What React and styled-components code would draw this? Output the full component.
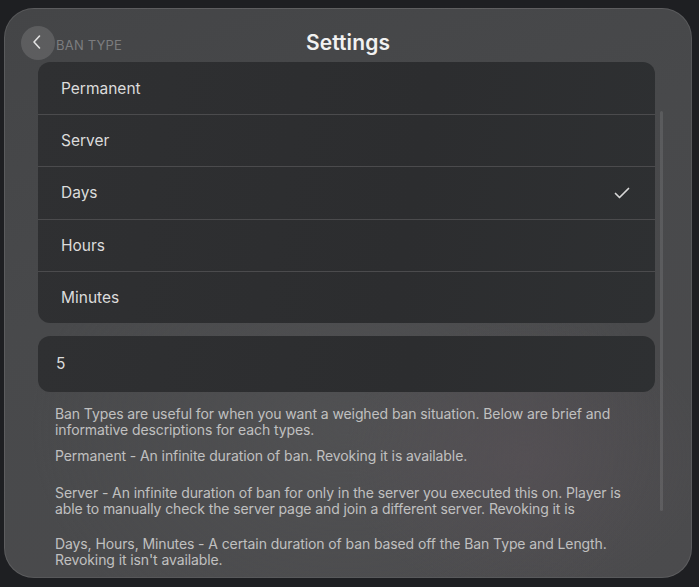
import React from "react";
import styled, { createGlobalStyle } from "styled-components";

const Global = createGlobalStyle`
  html, body { margin: 0; padding: 0; background: #1e1f22; }
  body { font-family: Inter, "Noto Sans", sans-serif; -webkit-font-smoothing: antialiased; }
  * { box-sizing: border-box; }
`;

const Page = styled.div`
  width: 699px;
  height: 587px;
  padding: 8px 7px 9px 4px;
  background: #1e1f22;
`;

const Panel = styled.div`
  position: relative;
  height: 570px;
  border-radius: 30px;
  overflow: hidden;
  border: 1px solid rgba(255, 255, 255, 0.1);
  background:
    radial-gradient(ellipse 260px 200px at 520px 450px, rgba(90, 82, 88, 0.55), transparent 70%),
    radial-gradient(ellipse 420px 320px at 340px 420px, rgba(85, 85, 87, 0.6), transparent 75%),
    linear-gradient(160deg, #444547 0%, #48494b 40%, #4b4b4d 100%);
`;

const Header = styled.div`
  position: absolute;
  top: 0;
  left: 0;
  right: 0;
  height: 60px;
  display: flex;
  align-items: center;
  justify-content: center;
  padding-top: 7px;
  pointer-events: none;
`;

const Title = styled.h1`
  margin: 0;
  font-size: 21px;
  font-weight: 600;
  color: #f1f1f1;
  letter-spacing: 0.1px;
`;

const BackButton = styled.button`
  position: absolute;
  left: 16px;
  top: 17px;
  width: 34px;
  height: 34px;
  border-radius: 50%;
  border: none;
  padding: 0;
  background: rgba(255, 255, 255, 0.13);
  display: flex;
  align-items: center;
  justify-content: center;
  padding-right: 3px;
  padding-bottom: 2px;
`;

const Content = styled.div`
  padding: 28px 36px 0 33px;
  display: flex;
  flex-direction: column;
`;

const SectionLabel = styled.div`
  font-size: 13px;
  line-height: 16px;
  text-transform: uppercase;
  color: #7c7d7f;
  padding-left: 18px;
  margin-bottom: 9px;
  letter-spacing: 0.2px;
`;

const Card = styled.div`
  background: linear-gradient(100deg, #2f3032 0%, #2c2d2f 60%, #2e3032 100%);
  border-radius: 12px;
  overflow: hidden;
`;

const Row = styled.div`
  height: 52.2px;
  display: flex;
  align-items: center;
  justify-content: space-between;
  padding: 0 25px 0 23px;
  font-size: 15.5px;
  color: #dcdcdc;
  border-top: ${(p) => (p.$first ? "none" : "1px solid #4b4b4d")};
`;

const InputCard = styled(Card)`
  margin-top: 13px;
  height: 56px;
  display: flex;
  align-items: center;
  padding: 0 18px;
  font-size: 15.5px;
  color: #dcdcdc;
`;

const Description = styled.div`
  margin-top: 14px;
  padding: 0 18px 0 17px;
`;

const Para = styled.p`
  margin: 0 0 ${(p) => p.$gap}px 0;
  font-size: 14px;
  line-height: 16px;
  letter-spacing: -0.1px;
  color: #c0c0c0;
`;

const ScrollThumb = styled.div`
  position: absolute;
  left: 655px;
  top: 102px;
  width: 3px;
  height: 400px;
  border-radius: 2px;
  background: rgba(255, 255, 255, 0.1);
`;

const options = ["Permanent", "Server", "Days", "Hours", "Minutes"];
const selected = "Days";

function Check() {
  return (
    <svg width="16" height="12" viewBox="0 0 16 12" fill="none">
      <polyline
        points="1.5,6.5 5.5,10.5 14.5,1.5"
        stroke="#d8d8d8"
        strokeWidth="1.7"
        strokeLinecap="round"
        strokeLinejoin="round"
      />
    </svg>
  );
}

function Chevron() {
  return (
    <svg width="10" height="16" viewBox="0 0 10 16" fill="none">
      <polyline
        points="7.5,2 2,8 7.5,14"
        stroke="#e2e2e2"
        strokeWidth="1.6"
        strokeLinecap="round"
        strokeLinejoin="round"
      />
    </svg>
  );
}

export default function App() {
  return (
    <>
      <Global />
      <Page>
        <Panel>
          <Content>
            <SectionLabel>Ban Type</SectionLabel>
            <Card>
              {options.map((o, i) => (
                <Row key={o} $first={i === 0}>
                  <span>{o}</span>
                  {o === selected && <Check />}
                </Row>
              ))}
            </Card>
            <InputCard>5</InputCard>
            <Description>
              <Para $gap={10.5}>
                Ban Types are useful for when you want a weighed ban situation. Below are brief and
                informative descriptions for each types.
              </Para>
              <Para $gap={20.5}>Permanent - An infinite duration of ban. Revoking it is available.</Para>
              <Para $gap={19}>
                Server - An infinite duration of ban for only in the server you executed this on. Player is
                able to manually check the server page and join a different server. Revoking it is
              </Para>
              <Para $gap={0}>
                Days, Hours, Minutes - A certain duration of ban based off the Ban Type and Length.
                Revoking it isn't available.
              </Para>
            </Description>
          </Content>
          <ScrollThumb />
          <Header>
            <BackButton aria-label="Back">
              <Chevron />
            </BackButton>
            <Title>Settings</Title>
          </Header>
        </Panel>
      </Page>
    </>
  );
}
